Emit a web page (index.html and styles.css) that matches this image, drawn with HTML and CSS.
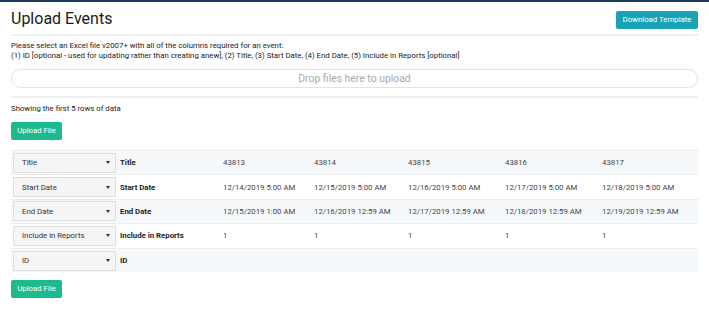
FILE: index.html
```html
<!DOCTYPE html>
<html lang="en">
<head>
<meta charset="utf-8">
<title>Upload Events</title>
<link rel="stylesheet" href="styles.css">
</head>
<body>
<div class="topbar"></div>
<div class="page">
  <div class="header">
    <h1 class="title">Upload Events</h1>
    <button class="btn btn-info">Download Template</button>
  </div>
  <div class="rule"></div>
  <p class="intro">Please select an Excel file v2007+ with all of the columns required for an event:<br>(1) ID [optional - used for updating rather than creating anew], (2) Title, (3) Start Date, (4) End Date, (5) Include in Reports [optional]</p>
  <div class="dropzone">Drop files here to upload</div>
  <div class="rule rule-2"></div>
  <p class="showing">Showing the first 5 rows of data</p>
  <button class="btn btn-success">Upload File</button>
  <table class="data">
    <colgroup>
      <col class="c-sel"><col class="c-lab"><col class="c-d1"><col class="c-d2"><col class="c-d3"><col class="c-d4"><col class="c-d5">
    </colgroup>
    <tbody>
      <tr class="odd">
        <td class="sel-cell"><div class="fake-select"><span>Title</span><i class="caret"></i></div></td>
        <td class="label">Title</td>
        <td>43813</td><td>43814</td><td>43815</td><td>43816</td><td>43817</td>
      </tr>
      <tr>
        <td class="sel-cell"><div class="fake-select"><span>Start Date</span><i class="caret"></i></div></td>
        <td class="label">Start Date</td>
        <td>12/14/2019 5:00 AM</td><td>12/15/2019 5:00 AM</td><td>12/16/2019 5:00 AM</td><td>12/17/2019 5:00 AM</td><td>12/18/2019 5:00 AM</td>
      </tr>
      <tr class="odd">
        <td class="sel-cell"><div class="fake-select"><span>End Date</span><i class="caret"></i></div></td>
        <td class="label">End Date</td>
        <td>12/15/2019 1:00 AM</td><td>12/16/2019 12:59 AM</td><td>12/17/2019 12:59 AM</td><td>12/18/2019 12:59 AM</td><td>12/19/2019 12:59 AM</td>
      </tr>
      <tr>
        <td class="sel-cell"><div class="fake-select"><span>Include in Reports</span><i class="caret"></i></div></td>
        <td class="label">Include in Reports</td>
        <td>1</td><td>1</td><td>1</td><td>1</td><td>1</td>
      </tr>
      <tr class="odd">
        <td class="sel-cell"><div class="fake-select"><span>ID</span><i class="caret"></i></div></td>
        <td class="label">ID</td>
        <td></td><td></td><td></td><td></td><td></td>
      </tr>
    </tbody>
  </table>
  <button class="btn btn-success btn-bottom">Upload File</button>
</div>
</body>
</html>
```
FILE: styles.css
```css
* { box-sizing: border-box; }
html, body { margin: 0; padding: 0; background: #fff; }
body {
  font-family: Roboto, "Liberation Sans", Arial, sans-serif;
  color: #222;
  font-size: 7.8px;
}
.topbar { height: 2px; background: #1d3b5c; }
.page { padding: 0 11px; }
.header {
  display: flex;
  justify-content: space-between;
  align-items: flex-start;
  padding-top: 7px;
}
.title {
  margin: 0;
  font-size: 16px;
  line-height: 19px;
  font-weight: 400;
  color: #1a1a1a;
}
.btn {
  border: none;
  border-radius: 2px;
  color: #fff;
  font-family: inherit;
  font-size: 7.8px;
  line-height: 18px;
  height: 18px;
  cursor: pointer;
}
.btn-info { background: #1aa3b5; margin-top: 2px; width: 82px; padding: 0; }
.btn-success { background: #1cba8c; width: 51px; padding: 0; display: block; margin-top: 8px; }
.btn-bottom { margin-top: 8px; }
.rule { height: 2px; background: #f1f1f1; margin-top: 5px; }
.intro { margin: 5px 0 0; line-height: 9.5px; color: #222; }
.dropzone {
  margin-top: 9px;
  height: 19px;
  border: 1px solid #e3e3e3;
  border-radius: 10px;
  display: flex;
  align-items: center;
  justify-content: center;
  color: #a9a9a9;
  font-size: 10.4px;
}
.rule-2 { margin-top: 8px; }
.showing { margin: 6px 0 0; line-height: 10px; }
.data {
  margin-top: 10px;
  width: 100%;
  table-layout: fixed;
  border-collapse: collapse;
}
.c-sel { width: 105px; }
.c-lab { width: 107px; }
.c-d1 { width: 91px; }
.c-d2 { width: 94px; }
.c-d3 { width: 97px; }
.c-d4 { width: 97px; }
.c-d5 { width: 96px; }
.data tr { border-top: 1px solid #ececec; }
.data tr.odd { background: #f6f9fc; }
.data td {
  height: 24.4px;
  padding: 0;
  vertical-align: middle;
  color: #444;
  white-space: nowrap;
}
.data td.sel-cell { padding-left: 2px; }
.data td.label { padding-left: 4px; font-weight: 700; color: #222; }
.fake-select {
  height: 20px;
  width: 103px;
  background: #f5f5f5;
  border: 1px solid #dedede;
  display: flex;
  align-items: center;
  justify-content: space-between;
  padding: 0 5px 0 8px;
  color: #333;
}
.caret {
  width: 0; height: 0;
  border-left: 2px solid transparent;
  border-right: 2px solid transparent;
  border-top: 3px solid #333;
}
```
